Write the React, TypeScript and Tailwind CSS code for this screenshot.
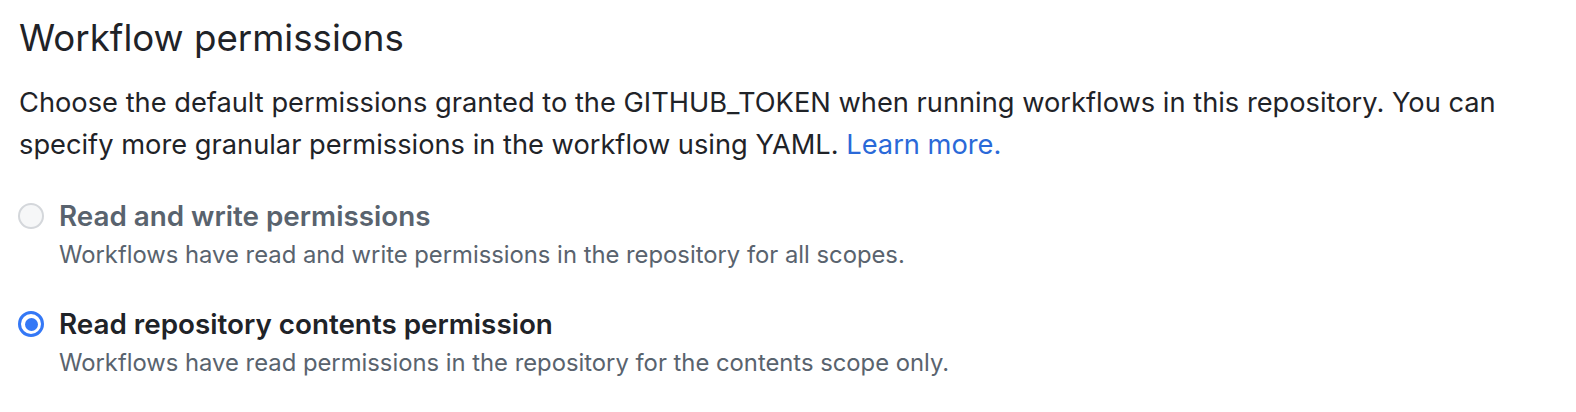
import React from "react";

function Radio({ checked }: { checked: boolean }) {
  return checked ? (
    <span className="flex h-[26px] w-[26px] shrink-0 items-center justify-center rounded-full border-[3px] border-[#3478f6] bg-white">
      <span className="h-[13px] w-[13px] rounded-full bg-[#3478f6]" />
    </span>
  ) : (
    <span className="h-[26px] w-[26px] shrink-0 rounded-full border-2 border-[#d4d7db] bg-[#f6f7f8]" />
  );
}

function Option({
  checked,
  label,
  desc,
  labelColor,
}: {
  checked: boolean;
  label: string;
  desc: string;
  labelColor: string;
}) {
  return (
    <div className="mt-[32px]">
      <div className="flex items-center gap-[15px] pl-[18px]">
        <Radio checked={checked} />
        <span className={`text-[27.8px] font-semibold leading-[36px] ${labelColor}`}>{label}</span>
      </div>
      <div className="mt-[2px] pl-[59px] text-[23.8px] leading-[38px] text-[#59636e]">{desc}</div>
    </div>
  );
}

export default function App() {
  return (
    <div
      className="min-h-[412px] w-[1576px] bg-white pt-[14px]"
      style={{ fontFamily: 'Inter, "Liberation Sans", Arial, sans-serif' }}
    >
      <h2 className="pl-[19px] text-[36.7px] font-normal leading-[48px] text-[#1f2328]">
        Workflow permissions
      </h2>
      <p className="mt-[20px] pl-[19px] pr-[40px] text-[27.25px] leading-[42px] text-[#1f2328]">
        Choose the default permissions granted to the GITHUB_TOKEN when running workflows in this repository. You can
        <br />
        specify more granular permissions in the workflow using YAML.{" "}
        <a className="text-[#2a69d8]">Learn more.</a>
      </p>
      <Option
        checked={false}
        label="Read and write permissions"
        desc="Workflows have read and write permissions in the repository for all scopes."
        labelColor="text-[#59636e]"
      />
      <Option
        checked={true}
        label="Read repository contents permission"
        desc="Workflows have read permissions in the repository for the contents scope only."
        labelColor="text-[#1f2328]"
      />
    </div>
  );
}
